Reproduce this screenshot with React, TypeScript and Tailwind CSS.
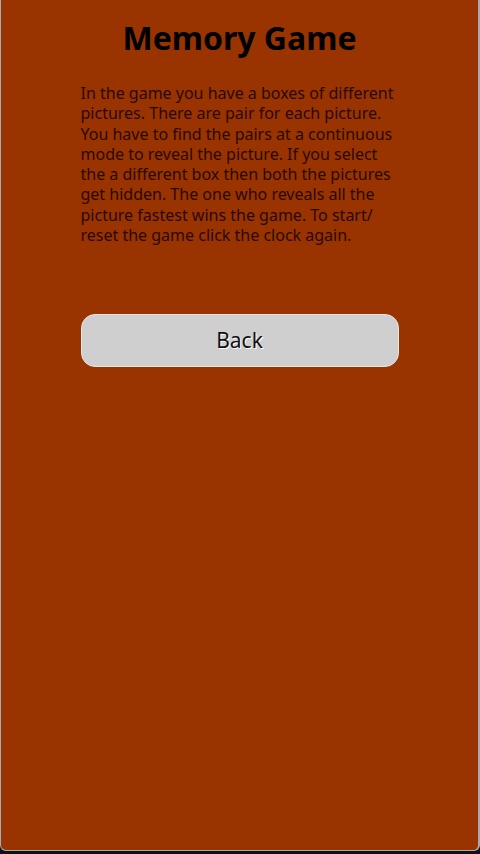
import React from "react";

export default function App() {
  return (
    <div className="w-[480px] h-[854px] bg-[#111111] overflow-hidden">
      <div className="h-[851px] bg-[#993300] border-l border-r-2 border-b border-[#a3acb5] rounded-b-[6px] flex flex-col items-center">
        <h1
          className="mt-[18px] text-[32px] leading-[40px] font-bold text-black text-center"
          style={{ fontFamily: '"Noto Sans", sans-serif' }}
        >
          Memory Game
        </h1>
        <div className="w-[320px] mt-[25px] pl-px">
          <p
            className="text-[16px] leading-[20.3px] text-[#2a0a00]"
            style={{ fontFamily: '"Noto Sans", sans-serif' }}
          >
            In the game you have a boxes of different pictures. There are pair for each picture. You have to find the pairs at a continuous mode to reveal the picture. If you select the a different box then both the pictures get hidden. The one who reveals all the picture fastest wins the game. To start/ reset the game click the clock again.
          </p>
          <button
            className="mt-[69px] w-[318px] h-[53px] rounded-[14px] bg-[#cfcfcf] border border-[#e4e4e4] text-[21px] text-[#111111] text-shadow-[1px_1px_0_#ffffff] flex items-center justify-center"
            style={{ fontFamily: '"Noto Sans", sans-serif' }}
          >
            Back
          </button>
        </div>
      </div>
    </div>
  );
}
